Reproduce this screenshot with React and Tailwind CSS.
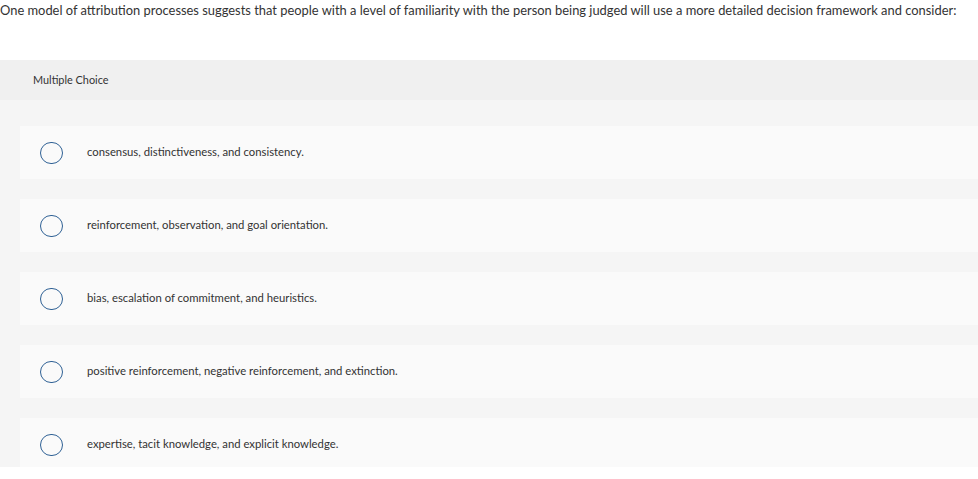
import React from "react";

const options = [
  "consensus, distinctiveness, and consistency.",
  "reinforcement, observation, and goal orientation.",
  "bias, escalation of commitment, and heuristics.",
  "positive reinforcement, negative reinforcement, and extinction.",
  "expertise, tacit knowledge, and explicit knowledge.",
];

export default function App() {
  return (
    <div className="w-[978px] h-[479px] bg-white overflow-hidden text-[#333333]" style={{ fontFamily: "Lato, 'Open Sans', sans-serif" }}>
      <p className="text-[12.9px] leading-[16px] pt-[2px] h-[60px] m-0 whitespace-nowrap">
        One model of attribution processes suggests that people with a level of familiarity with the person being judged will use a more detailed decision framework and consider:
      </p>
      <div className="h-[40px] bg-[#f0f0f0] flex items-center pl-[33px] text-[10.9px] text-[#333]">
        Multiple Choice
      </div>
      <div className="h-[367px] bg-[#f5f5f5] pt-[26px] pl-[20px] flex flex-col gap-[20px] overflow-hidden">
        {options.map((o) => (
          <div key={o} className="h-[53px] shrink-0 bg-[#fafafa] flex items-center">
            <div className="ml-[20px] w-[23px] h-[22px] rounded-full border-[1.5px] border-[#2f6195] shrink-0" />
            <span className="ml-[24px] text-[11.3px] text-[#333]">{o}</span>
          </div>
        ))}
      </div>
    </div>
  );
}
